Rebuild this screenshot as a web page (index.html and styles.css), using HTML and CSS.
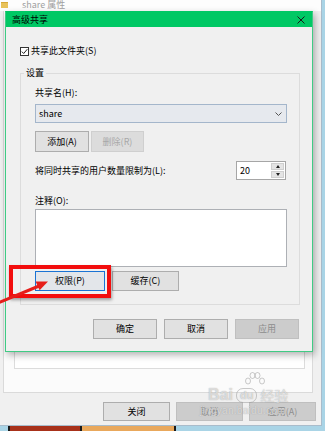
FILE: index.html
```html
<!DOCTYPE html>
<html>
<head>
<meta charset="utf-8">
<title>高级共享</title>
<link rel="stylesheet" href="styles.css">
</head>
<body>
<div class="desktop">
  <div class="desk-pic pic-red"></div>
  <div class="desk-pic pic-orange"></div>

  <div class="parent-win">
    <div class="parent-title">
      <span class="folder"></span>
      <span class="parent-title-text">share 属性</span>
    </div>
    <div class="parent-body">
      <div class="tab-page"><div class="tab-inner"></div></div>
      <div class="parent-buttons">
        <div class="btn pbtn">关闭</div>
        <div class="btn pbtn disabled">取消</div>
        <div class="btn pbtn disabled">应用(A)</div>
      </div>
    </div>
  </div>

  <div class="dialog">
    <div class="titlebar">
      <span class="title-text">高级共享</span>
      <svg class="close-icon" width="8" height="8" viewBox="0 0 8 8"><path d="M0.5 0.5 L7.5 7.5 M7.5 0.5 L0.5 7.5" stroke="#1a1a1a" stroke-width="1" fill="none"/></svg>
    </div>
    <div class="dlg-body">
      <div class="check-row">
        <span class="checkbox"><svg width="7" height="7" viewBox="0 0 7 7"><path d="M0.8 3.6 L2.7 5.5 L6.3 1.2" stroke="#222" stroke-width="1" fill="none"/></svg></span>
        <span>共享此文件夹(S)</span>
      </div>

      <div class="group">
        <div class="group-label">设置</div>
        <div class="field-label share-label">共享名(H):</div>
        <div class="combo">
          <span class="combo-text">share</span>
          <svg class="chevron" width="7" height="4" viewBox="0 0 7 4"><path d="M0.5 0.5 L3.5 3.5 L6.5 0.5" stroke="#555" stroke-width="1" fill="none"/></svg>
        </div>
        <div class="btn-row add-row">
          <div class="btn add-btn">添加(A)</div>
          <div class="btn add-btn off">删除(R)</div>
        </div>
        <div class="limit-row">
          <span>将同时共享的用户数量限制为(L):</span>
          <div class="spin">
            <span class="spin-val">20</span>
            <div class="spin-btns">
              <span class="spin-btn"><span class="tri-up"></span></span>
              <span class="spin-btn"><span class="tri-down"></span></span>
            </div>
          </div>
        </div>
        <div class="field-label comment-label">注释(O):</div>
        <div class="textarea"></div>
        <div class="btn-row perm-row">
          <div class="btn perm-btn focused">权限(P)</div>
          <div class="btn cache-btn">缓存(C)</div>
        </div>
      </div>

      <div class="dlg-buttons">
        <div class="btn dbtn">确定</div>
        <div class="btn dbtn">取消</div>
        <div class="btn dbtn disabled">应用</div>
      </div>
    </div>
  </div>

  <div class="highlight"></div>
  <svg class="arrow" width="60" height="40" viewBox="0 0 60 40">
    <path d="M-2 33 L39 16" stroke="#e61e1a" stroke-width="3" fill="none"/>
    <path d="M48 11.5 L39.6 20.2 L35.6 11.4 Z" fill="#e61e1a"/>
  </svg>

  <div class="watermark">
    <svg class="paw" width="22" height="15" viewBox="0 0 22 15">
      <g fill="none" stroke="rgba(150,150,150,0.5)" stroke-width="1">
        <ellipse cx="4" cy="9" rx="2.5" ry="3"/>
        <ellipse cx="8.5" cy="3.5" rx="2.5" ry="3"/>
        <ellipse cx="13.5" cy="3.5" rx="2.5" ry="3"/>
        <ellipse cx="18" cy="9" rx="2.5" ry="3"/>
      </g>
    </svg>
    <div class="wm-line">
      <span class="wm-bai">Bai</span>
      <span class="wm-du">du</span>
      <span class="wm-jy">经验</span>
    </div>
    <div class="wm-url">jingyan.baidu.com</div>
  </div>
</div>
</body>
</html>
```
FILE: styles.css
```css
* { box-sizing: border-box; margin: 0; padding: 0; }

body {
  margin: 0;
  width: 325px;
  height: 431px;
  overflow: hidden;
  font-family: "Noto Sans CJK SC", "Noto Sans", sans-serif;
  font-size: 9px;
  line-height: 12px;
  color: #000;
}

.desktop {
  position: relative;
  width: 325px;
  height: 431px;
  background: #a9d4e6;
  overflow: hidden;
}

.desk-pic {
  position: absolute;
  top: 424px;
  height: 20px;
}
.pic-red {
  left: 8px;
  width: 74px;
  background: #a8311a;
  border-left: 2px solid #1a1a1a;
  border-right: 2px solid #1a1a1a;
}
.pic-orange {
  left: 82px;
  width: 94px;
  background: #e9a85c;
  border-right: 2px solid #1a1a1a;
}

/* parent properties window */
.parent-win {
  position: absolute;
  left: -2px;
  top: -20px;
  width: 324px;
  height: 446px;
  background: #f0f0f0;
  border: 1px solid #a9bccb;
  display: flex;
  flex-direction: column;
}
.parent-title {
  height: 30px;
  background: #fdfdfd;
  display: flex;
  align-items: flex-end;
  padding: 0 0 1px 2px;
  gap: 14px;
}
.folder {
  width: 7px;
  height: 6px;
  margin-bottom: 2px;
  background: #e8c25a;
  border-top: 1px solid #d4a83a;
}
.parent-title-text {
  color: #a0a0a0;
  line-height: 10px;
  height: 10px;
}
.parent-body {
  flex: 1;
  display: flex;
  flex-direction: column;
  padding: 0 5px 4px 4px;
}
.tab-page {
  flex: 1;
  background: #fbfbfb;
  border: 1px solid #dadada;
  border-top: none;
  margin-right: 3px;
  display: flex;
  flex-direction: column;
  padding: 30px 7px 23px 10px;
}
.tab-inner {
  flex: 1;
  background: #fff;
  border: 1px solid #dcdcdc;
}
.parent-buttons {
  margin-top: 9px;
  display: flex;
  justify-content: flex-end;
  gap: 6px;
}
.pbtn {
  width: 67px;
  height: 19px;
}

/* buttons */
.btn {
  display: flex;
  align-items: center;
  justify-content: center;
  background: #e1e1e1;
  border: 1px solid #adadad;
  color: #000;
}
.btn.disabled {
  background: #cccccc;
  border-color: #bfbfbf;
  color: #8c8c8c;
}

/* dialog */
.dialog {
  position: absolute;
  left: 5px;
  top: 11px;
  width: 308px;
  height: 341px;
  background: #f0f0f0;
  border: 1px solid #3fcb84;
  border-top-color: #00c864;
  box-shadow: 2px 3px 7px rgba(0, 0, 0, 0.3);
  display: flex;
  flex-direction: column;
}
.titlebar {
  height: 15px;
  background: #00c864;
  display: flex;
  align-items: center;
  justify-content: space-between;
  padding: 0 7px 0 6px;
}
.title-text { line-height: 12px; }
.close-icon { display: block; }

.dlg-body {
  flex: 1;
  display: flex;
  flex-direction: column;
  padding: 19px 12px 0 14px;
}
.check-row {
  display: flex;
  align-items: center;
  gap: 2px;
  height: 10px;
}
.checkbox {
  width: 9px;
  height: 9px;
  border: 1px solid #333;
  background: #fff;
  display: flex;
  align-items: center;
  justify-content: center;
}
.checkbox svg { display: block; }

.group {
  margin-top: 17px;
  border: 1px solid #dcdcdc;
  display: flex;
  flex-direction: column;
  padding: 0 12px 13px 14px;
}
.group-label {
  align-self: flex-start;
  margin: -7px 0 0 -11px;
  padding: 0 2px;
  background: #f0f0f0;
  height: 12px;
}
.field-label { height: 12px; }
.share-label { margin-top: 8px; }
.combo {
  margin-top: 5px;
  height: 19px;
  background: #e6e9ee;
  border: 1px solid #a4b6cb;
  display: flex;
  align-items: center;
  justify-content: space-between;
  padding: 0 4px 0 3px;
}
.combo-text { font-size: 9px; }
.chevron { display: block; }

.btn-row {
  display: flex;
}
.add-row {
  margin-top: 8px;
  gap: 2px;
}
.add-btn {
  width: 54px;
  height: 21px;
}
.add-btn.off {
  width: 53px;
  background: #dcdcdc;
  border-color: #cfcfcf;
  color: #a8a8a8;
}

.limit-row {
  margin-top: 9px;
  height: 19px;
  display: flex;
  align-items: center;
  justify-content: space-between;
  padding-right: 1px;
}
.spin {
  width: 50px;
  height: 19px;
  background: #fff;
  border: 1px solid #a6a6a6;
  display: flex;
  align-items: center;
  justify-content: space-between;
  padding: 1px 1px 1px 3px;
}
.spin-btns {
  display: flex;
  flex-direction: column;
  gap: 1px;
  height: 100%;
}
.spin-btn {
  flex: 1;
  width: 13px;
  background: #e4e4e4;
  border: 1px solid #cfcfcf;
  display: flex;
  align-items: center;
  justify-content: center;
}
.tri-up {
  width: 0; height: 0;
  border-left: 2.5px solid transparent;
  border-right: 2.5px solid transparent;
  border-bottom: 3px solid #222;
}
.tri-down {
  width: 0; height: 0;
  border-left: 2.5px solid transparent;
  border-right: 2.5px solid transparent;
  border-top: 3px solid #222;
}

.comment-label { margin-top: 15px; }
.textarea {
  margin-top: 2px;
  height: 58px;
  background: #fff;
  border: 1px solid #adb0b5;
}
.perm-row {
  margin-top: 4px;
  gap: 7px;
}
.perm-btn {
  width: 70px;
  height: 20px;
}
.perm-btn.focused {
  border: 1px solid #1a73d4;
  background: #e3e6ea;
}
.cache-btn {
  width: 67px;
  height: 20px;
}

.dlg-buttons {
  margin-top: 14px;
  margin-right: 1px;
  display: flex;
  justify-content: flex-end;
  gap: 7px;
}
.dbtn {
  width: 64px;
  height: 20px;
}

/* annotation overlays */
.highlight {
  position: absolute;
  left: 9px;
  top: 265px;
  width: 102px;
  height: 33px;
  border: 4px solid #f20d0d;
  box-shadow: 1px 2px 3px rgba(0, 0, 0, 0.35);
}
.arrow {
  position: absolute;
  left: 0;
  top: 270px;
}

.watermark {
  position: absolute;
  left: 200px;
  top: 372px;
  width: 110px;
  display: flex;
  flex-direction: column;
  align-items: flex-start;
  color: rgba(255, 255, 255, 0.6);
  text-shadow: 0 0 1px rgba(120, 120, 120, 0.7);
  font-family: "Liberation Sans", "Noto Sans CJK SC", sans-serif;
}
.paw {
  display: block;
  margin-left: 44px;
  height: 15px;
}
.wm-line {
  display: flex;
  align-items: center;
  gap: 3px;
  margin-left: 8px;
  height: 16px;
  line-height: 16px;
}
.wm-bai {
  font-size: 16px;
  font-weight: bold;
}
.wm-du {
  font-size: 11px;
  font-weight: bold;
  line-height: 13px;
  padding: 0 3px;
  border-radius: 7px;
  border: 1px solid rgba(150, 150, 150, 0.5);
}
.wm-jy {
  font-family: "Noto Sans CJK SC", sans-serif;
  font-size: 14px;
}
.wm-url {
  margin-top: 2px;
  font-size: 10px;
  line-height: 11px;
  height: 11px;
  letter-spacing: 0.3px;
}
```
